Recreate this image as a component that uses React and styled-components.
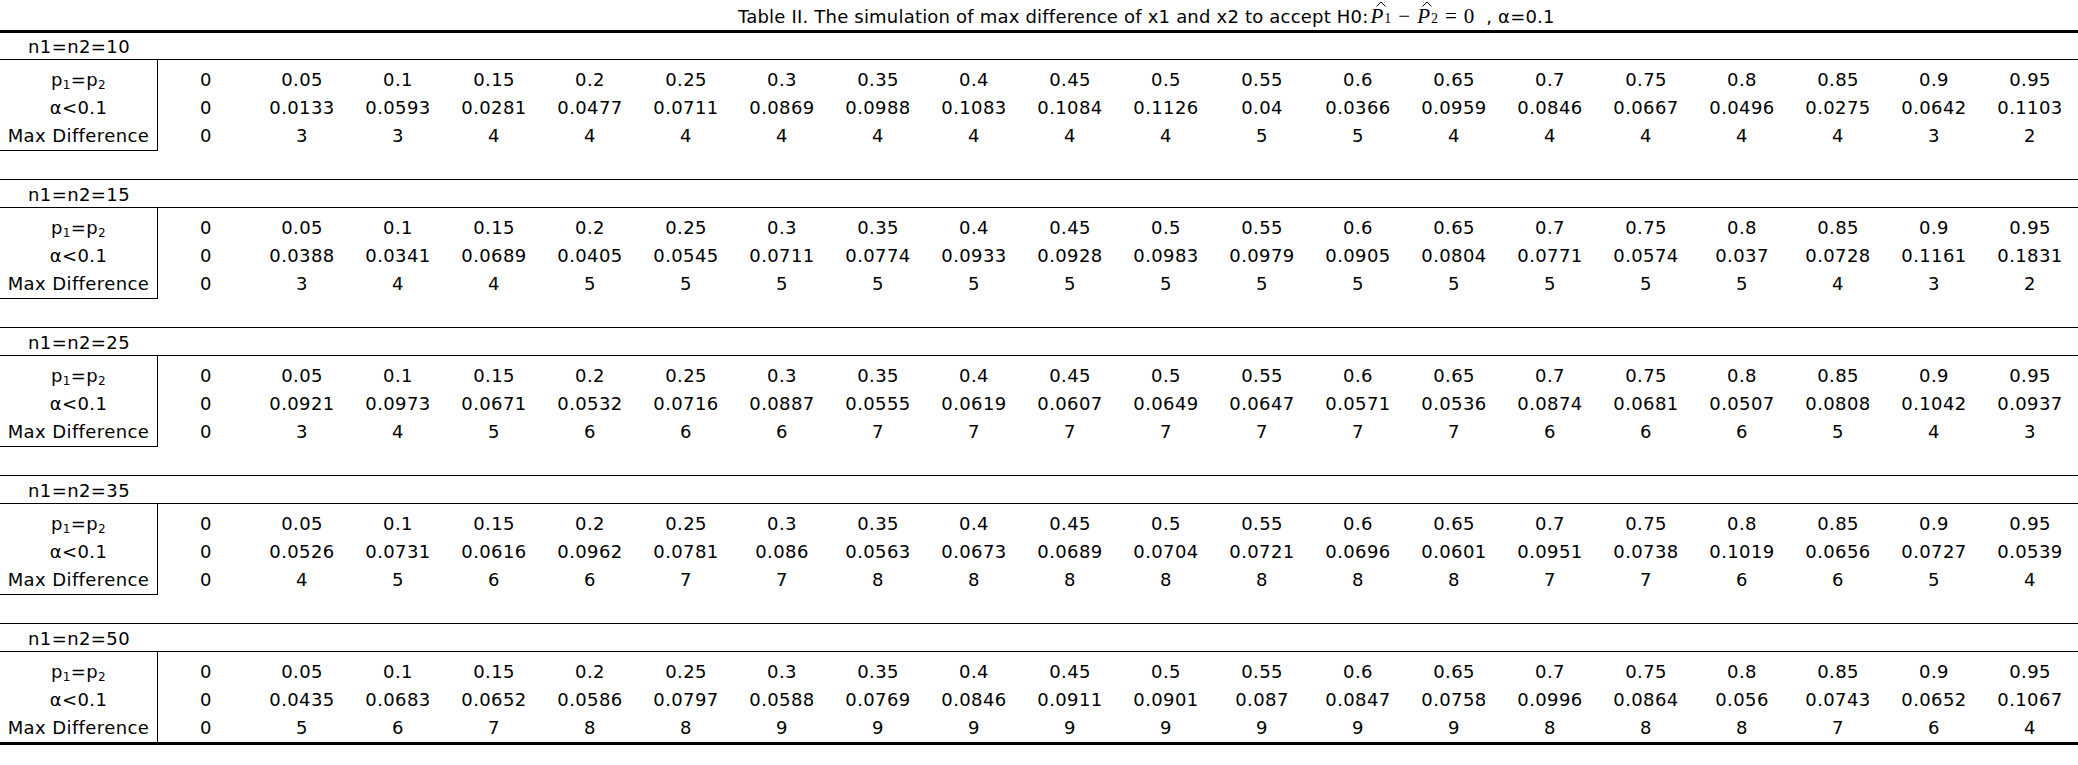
import React from 'react';
import styled, { createGlobalStyle } from 'styled-components';

const GlobalStyle = createGlobalStyle`
  body {
    margin: 0;
    background: #ffffff;
    color: #000000;
    font-family: "DejaVu Sans", "Liberation Sans", sans-serif;
    font-size: 18px;
    letter-spacing: 0.4px;
  }
`;

const Page = styled.div`
  width: 2078px;
  display: flex;
  flex-direction: column;
`;

const Title = styled.div`
  height: 28px;
  padding: 2px 0 0 738px;
  line-height: 28px;
  letter-spacing: 0.2px;
  white-space: nowrap;
  display: flex;
  align-items: baseline;
`;

const Math = styled.span`
  font-family: "Liberation Serif", "DejaVu Serif", serif;
  font-size: 21px;
  letter-spacing: 0;
  display: inline-flex;
  align-items: baseline;
  margin: 0 6px 0 2px;
`;

const HatVar = styled.span`
  position: relative;
  font-style: italic;
`;

const Hat = styled.svg`
  position: absolute;
  left: 5px;
  top: -1px;
`;

const MathSub = styled.span`
  font-size: 14px;
  vertical-align: -4px;
  margin-left: 1px;
`;

const Op = styled.span`
  margin: 0 7px;
`;

const Section = styled.section`
  border-top: ${({ $first }) => ($first ? '3px' : '1px')} solid #000;
  margin-top: ${({ $first }) => ($first ? '0' : '28px')};
`;

const Header = styled.div`
  width: 158px;
  height: 24px;
  padding-top: ${({ $first }) => ($first ? '2px' : '3px')};
  line-height: 24px;
  text-align: center;
`;

const Body = styled.div`
  display: flex;
  border-top: 1px solid #000;
  border-bottom: ${({ $last }) => ($last ? '3px solid #000' : 'none')};
`;

const Labels = styled.div`
  width: 157px;
  padding-top: 6px;
  border-right: 1px solid #000;
  border-bottom: ${({ $last }) => ($last ? 'none' : '1px solid #000')};
  display: flex;
  flex-direction: column;
`;

const Values = styled.div`
  padding-top: 6px;
  display: grid;
  grid-template-columns: repeat(20, 96px);
  grid-auto-rows: 28px;
`;

const Cell = styled.div`
  height: 28px;
  line-height: 28px;
  text-align: center;
  white-space: nowrap;
`;

const Sub = styled.sub`
  font-size: 12px;
  vertical-align: -3px;
  line-height: 0;
`;

const P = [0, 0.05, 0.1, 0.15, 0.2, 0.25, 0.3, 0.35, 0.4, 0.45, 0.5, 0.55, 0.6, 0.65, 0.7, 0.75, 0.8, 0.85, 0.9, 0.95];

const sections = [
  {
    n: 10,
    alpha: [0, 0.0133, 0.0593, 0.0281, 0.0477, 0.0711, 0.0869, 0.0988, 0.1083, 0.1084, 0.1126, 0.04, 0.0366, 0.0959, 0.0846, 0.0667, 0.0496, 0.0275, 0.0642, 0.1103],
    diff: [0, 3, 3, 4, 4, 4, 4, 4, 4, 4, 4, 5, 5, 4, 4, 4, 4, 4, 3, 2],
  },
  {
    n: 15,
    alpha: [0, 0.0388, 0.0341, 0.0689, 0.0405, 0.0545, 0.0711, 0.0774, 0.0933, 0.0928, 0.0983, 0.0979, 0.0905, 0.0804, 0.0771, 0.0574, 0.037, 0.0728, 0.1161, 0.1831],
    diff: [0, 3, 4, 4, 5, 5, 5, 5, 5, 5, 5, 5, 5, 5, 5, 5, 5, 4, 3, 2],
  },
  {
    n: 25,
    alpha: [0, 0.0921, 0.0973, 0.0671, 0.0532, 0.0716, 0.0887, 0.0555, 0.0619, 0.0607, 0.0649, 0.0647, 0.0571, 0.0536, 0.0874, 0.0681, 0.0507, 0.0808, 0.1042, 0.0937],
    diff: [0, 3, 4, 5, 6, 6, 6, 7, 7, 7, 7, 7, 7, 7, 6, 6, 6, 5, 4, 3],
  },
  {
    n: 35,
    alpha: [0, 0.0526, 0.0731, 0.0616, 0.0962, 0.0781, 0.086, 0.0563, 0.0673, 0.0689, 0.0704, 0.0721, 0.0696, 0.0601, 0.0951, 0.0738, 0.1019, 0.0656, 0.0727, 0.0539],
    diff: [0, 4, 5, 6, 6, 7, 7, 8, 8, 8, 8, 8, 8, 8, 7, 7, 6, 6, 5, 4],
  },
  {
    n: 50,
    alpha: [0, 0.0435, 0.0683, 0.0652, 0.0586, 0.0797, 0.0588, 0.0769, 0.0846, 0.0911, 0.0901, 0.087, 0.0847, 0.0758, 0.0996, 0.0864, 0.056, 0.0743, 0.0652, 0.1067],
    diff: [0, 5, 6, 7, 8, 8, 9, 9, 9, 9, 9, 9, 9, 9, 8, 8, 8, 7, 6, 4],
  },
];

const PHat = ({ sub }) => (
  <>
    <HatVar>
      P
      <Hat width="10" height="6" viewBox="0 0 10 6">
        <polyline points="0.5,5.5 5,1 9.5,5.5" fill="none" stroke="#000" strokeWidth="1" />
      </Hat>
    </HatVar>
    <MathSub>{sub}</MathSub>
  </>
);

const SimSection = ({ n, alpha, diff, first, last }) => (
  <Section $first={first}>
    <Header $first={first}>n1=n2={n}</Header>
    <Body $last={last}>
      <Labels $last={last}>
        <Cell>p<Sub>1</Sub>=p<Sub>2</Sub></Cell>
        <Cell>α&lt;0.1</Cell>
        <Cell>Max Difference</Cell>
      </Labels>
      <Values>
        {P.map((v, i) => <Cell key={'p' + i}>{v}</Cell>)}
        {alpha.map((v, i) => <Cell key={'a' + i}>{v}</Cell>)}
        {diff.map((v, i) => <Cell key={'d' + i}>{v}</Cell>)}
      </Values>
    </Body>
  </Section>
);

export default function App() {
  return (
    <Page>
      <GlobalStyle />
      <Title>
        Table II. The simulation of max difference of x1 and x2 to accept H0:
        <Math>
          <PHat sub="1" />
          <Op>−</Op>
          <PHat sub="2" />
          <Op>=</Op>
          0
        </Math>
        &nbsp;, α=0.1
      </Title>
      {sections.map((s, i) => (
        <SimSection
          key={s.n}
          {...s}
          first={i === 0}
          last={i === sections.length - 1}
        />
      ))}
    </Page>
  );
}
